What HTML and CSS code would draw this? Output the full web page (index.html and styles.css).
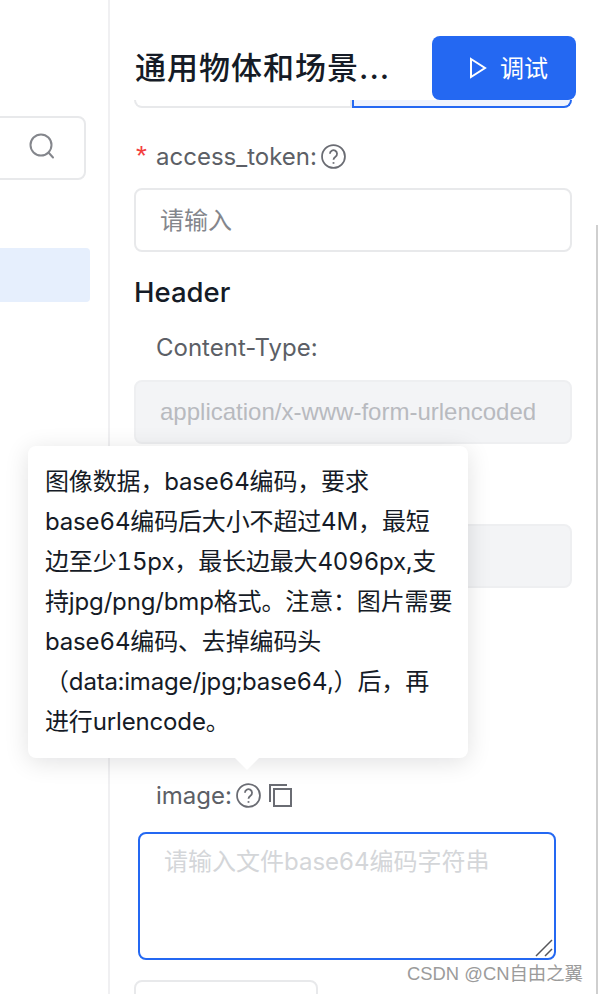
FILE: index.html
```html
<!DOCTYPE html>
<html lang="zh-CN">
<head>
<meta charset="utf-8">
<title>通用物体和场景识别</title>
<link rel="stylesheet" href="styles.css">
</head>
<body>
<div class="page">
  <aside class="sidebar">
    <div class="search">
      <svg class="search-icon" viewBox="0 0 26 26" width="26" height="26" fill="none" stroke="#84868c" stroke-width="2"><circle cx="12" cy="12" r="10.5"/><path d="M19.5 19.5l4.5 5" stroke-linecap="round"/></svg>
    </div>
    <div class="side-item"></div>
  </aside>
  <main class="main">
    <header class="head">
      <h1 class="title">通用物体和场景...</h1>
      <button class="run">
        <svg viewBox="0 0 18 22" width="18" height="22" fill="none" stroke="#fff" stroke-width="2"><path d="M2 2l14 9-14 9z"/></svg>
        <span>调试</span>
      </button>
    </header>
    <div class="tabs"><div class="tab"></div><div class="tab tab-on"></div></div>
    <div class="label label-first"><span class="req">*</span><span>access_token:</span><svg class="help" viewBox="0 0 24 24" width="25" height="25" fill="none" stroke="#6a6c73" stroke-width="1.7"><circle cx="12" cy="12" r="11"/><path d="M8.6 9.4a3.4 3.4 0 1 1 5.3 2.8c-1.2.8-1.9 1.4-1.9 3"/><path d="M12 17.4v1.6"/></svg></div>
    <div class="field"><span class="field-text">请输入</span></div>
    <h2 class="section">Header</h2>
    <div class="label label-sub">Content-Type:</div>
    <div class="field field-off"><span class="field-latin">application/x-www-form-urlencoded</span></div>
    <div class="field field-off field-two"></div>
    <div class="label label-image"><span>image:</span><svg class="help" viewBox="0 0 24 24" width="25" height="25" fill="none" stroke="#6a6c73" stroke-width="1.7"><circle cx="12" cy="12" r="11"/><path d="M8.6 9.4a3.4 3.4 0 1 1 5.3 2.8c-1.2.8-1.9 1.4-1.9 3"/><path d="M12 17.4v1.6"/></svg><svg class="copy" viewBox="0 0 23 23" width="23" height="23" fill="none" stroke="#6a6c73" stroke-width="2"><path d="M1 18V1h17"/><rect x="5" y="5" width="17" height="17"/></svg></div>
    <div class="area">请输入文件base64编码字符串<svg class="grip" viewBox="0 0 18 18" width="18" height="18" fill="none" stroke="#55565a" stroke-width="1.5"><path d="M1 17L17 1M10 17l7-7"/></svg></div>
    <div class="next"></div>
  </main>
</div>
<div class="tip">
  <p class="tip-text">图像数据，base64编码，要求<br>base64编码后大小不超过4M，最短<br>边至少15px，最长边最大4096px,支<br>持jpg/png/bmp格式。注意：图片需要<br>base64编码、去掉编码头<br>（data:image/jpg;base64,）后，再<br>进行urlencode。</p>
</div>
<div class="scroll"></div>
<div class="mark">CSDN @CN自由之翼</div>
</body>
</html>
```
FILE: styles.css
```css
* { box-sizing: border-box; }
html, body { margin: 0; height: 100%; }
body {
  position: relative;
  width: 598px;
  height: 994px;
  overflow: hidden;
  background: #fff;
  color: #151b26;
  font-family: Inter, "Noto Sans CJK SC", sans-serif;
  font-size: 24px;
}
.page { display: flex; height: 994px; }
.sidebar {
  width: 110px;
  flex: none;
  border-right: 2px solid #f0f0f2;
  padding-top: 116px;
  overflow: hidden;
}
.search {
  display: flex;
  align-items: center;
  justify-content: flex-end;
  width: 106px;
  height: 64px;
  margin-left: -20px;
  padding: 0 29px 4px 0;
  border: 2px solid #e8e9eb;
  border-radius: 8px;
}
.side-item {
  width: 90px;
  height: 54px;
  margin-top: 68px;
  background: #e6effd;
  border-radius: 0 4px 4px 0;
}
.main { flex: 1; padding-left: 24px; padding-right: 26px; min-width: 0; }
.head {
  display: flex;
  justify-content: space-between;
  align-items: center;
  height: 64px;
  margin: 36px -4px 0 0;
}
.title {
  margin: 0 0 0 1px;
  font-size: 31px;
  font-weight: 500;
  line-height: 64px;
  letter-spacing: 1px;
  white-space: nowrap;
}
.run {
  display: flex;
  align-items: center;
  justify-content: center;
  gap: 13px;
  width: 144px;
  height: 64px;
  padding: 0 0 4px 9px;
  border: 0;
  border-radius: 8px;
  background: #2468f2;
  color: #fff;
  font: inherit;
}
.run svg { margin-top: 4px; }
.tabs { display: flex; height: 8px; }
.tab {
  flex: 0 0 218px;
  border: 2px solid #e8e9eb;
  border-top: 0;
  border-radius: 0 0 0 8px;
}
.tab-on {
  flex: 1;
  background: #eef3fe;
  border-color: #2468f2;
  border-radius: 0 0 8px 0;
}
.label {
  display: flex;
  align-items: center;
  height: 40px;
  padding-left: 22px;
  color: #5c5f66;
  white-space: nowrap;
}
.label-first { margin-top: 28px; }
.req {
  width: 20px;
  margin-left: -20px;
  color: #f33e3e;
  font-family: "Liberation Sans", sans-serif;
  font-size: 28px;
  line-height: 40px;
}
.help { margin-left: 4px; flex: none; }
.copy { margin-left: 8px; flex: none; }
.label-sub { margin-top: 15px; }
.label-image { margin-top: 187px; }
.field {
  display: flex;
  align-items: center;
  height: 64px;
  margin-top: 12px;
  padding-left: 24px;
  border: 2px solid #e8e9eb;
  border-radius: 8px;
  color: #84868c;
  white-space: nowrap;
}
.field-text { margin-bottom: 4px; }
.field-latin { font-family: "Liberation Sans", sans-serif; }
.field-off { margin-top: 13px; background: #f3f4f6; border-color: #eeeff1; color: #b8babf; }
.field-two { margin-top: 80px; }
.section {
  margin: 20px 0 0;
  font-size: 27.5px;
  font-weight: 500;
  line-height: 40px;
}
.area {
  position: relative;
  width: 418px;
  height: 128px;
  margin: 17px 0 0 4px;
  padding: 10px 24px;
  border: 2px solid #2468f2;
  border-radius: 8px;
  color: #d4d6d9;
  line-height: 36px;
}
.grip { position: absolute; right: 1px; bottom: 1px; }
.next {
  width: 184px;
  height: 40px;
  margin-top: 20px;
  border: 2px solid #e8e9eb;
  border-radius: 8px;
}
.tip {
  position: absolute;
  left: 28px;
  top: 446px;
  width: 440px;
  height: 312px;
  padding: 16px 10px 16px 17px;
  background: #fff;
  border-radius: 8px;
  box-shadow: 0 4px 24px rgba(7, 12, 20, .12);
}
.tip::after {
  content: "";
  position: absolute;
  left: 207px;
  bottom: -12px;
  border-style: solid;
  border-width: 12px 12px 0;
  border-color: #fff transparent transparent;
}
.tip-text {
  margin: 0;
  line-height: 40px;
  letter-spacing: -.15px;
  font-feature-settings: "tnum";
  white-space: nowrap;
}
.scroll {
  position: absolute;
  right: 0;
  top: 225px;
  width: 2px;
  height: 769px;
  background: #cfcfcf;
}
.mark {
  position: absolute;
  left: 407px;
  top: 960px;
  color: #9b9b9b;
  font-family: "Liberation Sans", "Noto Sans CJK SC", sans-serif;
  font-size: 18.4px;
  line-height: 28px;
  white-space: nowrap;
}
```
